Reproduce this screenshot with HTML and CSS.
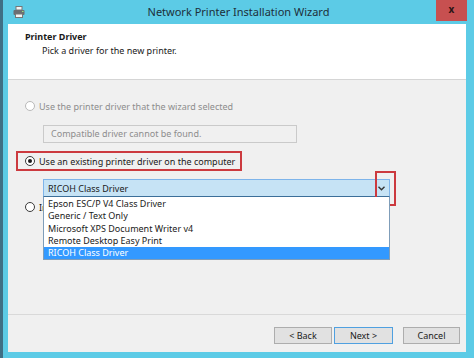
FILE: index.html
```html
<!DOCTYPE html>
<html lang="en">
<head>
    <meta charset="UTF-8">
    <title>Network Printer Installation Wizard</title>
    <link rel="stylesheet" href="styles.css">
</head>
<body>
    <div class="window">
        <div class="titlebar">
            <svg class="app-icon" width="12" height="12" viewBox="0 0 12 12">
                <rect x="3" y="0.5" width="6" height="3.5" fill="#f4f4f4" stroke="#777"/>
                <rect x="0.5" y="4" width="11" height="5" rx="1" fill="#6b6f74"/>
                <rect x="2.5" y="8" width="7" height="3.5" fill="#f4f4f4" stroke="#777"/>
                <rect x="9" y="5" width="1.5" height="1" fill="#9fe27a"/>
            </svg>
            <div class="title">Network Printer Installation Wizard</div>
            <div class="close">x</div>
        </div>
        <div class="frame">
            <div class="header">
                <div class="header-title">Printer Driver</div>
                <div class="header-sub">Pick a driver for the new printer.</div>
            </div>
            <div class="content">
                <div class="option disabled"><span class="radio"></span>Use the printer driver that the wizard selected</div>
                <div class="textbox">Compatible driver cannot be found.</div>
                <div class="option highlight"><span class="radio checked"></span>Use an existing printer driver on the computer</div>
                <div class="combo">
                    <span class="combo-value">RICOH Class Driver</span>
                    <svg class="combo-arrow" width="7" height="5" viewBox="0 0 7 5">
                        <path d="M0.5 0.8 L3.5 3.8 L6.5 0.8" fill="none" stroke="#333" stroke-width="1.4"/>
                    </svg>
                    <div class="arrow-mark"></div>
                    <ul class="list">
                        <li>Epson ESC/P V4 Class Driver</li>
                        <li>Generic / Text Only</li>
                        <li>Microsoft XPS Document Writer v4</li>
                        <li>Remote Desktop Easy Print</li>
                        <li class="selected">RICOH Class Driver</li>
                    </ul>
                </div>
                <div class="option under-list"><span class="radio"></span>In</div>
            </div>
            <div class="footer">
                <button class="btn">&lt; Back</button>
                <button class="btn default">Next &gt;</button>
                <button class="btn cancel">Cancel</button>
            </div>
        </div>
    </div>
</body>
</html>
```

FILE: styles.css
```css
html, body {
    margin: 0;
    padding: 0;
}
body {
    background-color: #3f6f85;
    font-family: "Noto Sans", "Open Sans", sans-serif;
    font-size: 9px;
    color: #1a1a1a;
}
.window {
    margin-left: 3px;
    height: 358px;
    background-color: #5ccbe6;
    display: flex;
    flex-direction: column;
}
.titlebar {
    height: 24px;
    display: grid;
    grid-template-columns: 1fr auto 1fr;
    align-items: start;
}
.app-icon {
    margin: 6px 0 0 10px;
}
.title {
    font-size: 11px;
    color: #1d2f3a;
    line-height: 22px;
    padding-top: 1px;
}
.close {
    justify-self: end;
    width: 31px;
    height: 21px;
    margin-right: 7px;
    background-color: #c75050;
    color: #2b1414;
    font-weight: bold;
    font-size: 10px;
    text-align: center;
    line-height: 19px;
}
.frame {
    flex: 1;
    margin: 0 8px 6px 5px;
    display: flex;
    flex-direction: column;
    background-color: #f0f0f0;
}
.header {
    height: 56px;
    background-color: white;
    border-bottom: 1px solid #d5d5d5;
    padding: 6px 0 0 17px;
    box-sizing: border-box;
}
.header-title {
    font-weight: bold;
    line-height: 14px;
}
.header-sub {
    line-height: 14px;
    padding-left: 17px;
}
.content {
    flex: 1;
    padding: 19px 0 0 8px;
}
.option {
    display: flex;
    align-items: center;
    height: 14px;
    padding-left: 9px;
    white-space: nowrap;
}
.option.disabled {
    color: #8d8d8d;
}
.radio {
    flex: none;
    width: 8px;
    height: 8px;
    border: 1px solid #3a3a3a;
    border-radius: 50%;
    background-color: white;
    margin-right: 4px;
    position: relative;
}
.disabled .radio {
    border-color: #b9b9b9;
}
.radio.checked::after {
    content: "";
    position: absolute;
    left: 2px;
    top: 2px;
    width: 4px;
    height: 4px;
    border-radius: 50%;
    background-color: #1a1a1a;
}
.textbox {
    width: 254px;
    height: 18px;
    margin: 12px 0 0 27px;
    border: 1px solid #cacaca;
    box-sizing: border-box;
    color: #8d8d8d;
    padding-left: 7px;
    line-height: 16px;
}
.option.highlight {
    width: 226px;
    height: 20px;
    margin-top: 8px;
    padding-left: 7px;
    border: 2px solid #cc3a3f;
    box-sizing: border-box;
}
.combo {
    position: relative;
    width: 347px;
    height: 18px;
    margin: 8px 0 0 27px;
    box-sizing: border-box;
    border: 1px solid #7eb4ea;
    border-bottom-color: #3c6f99;
    background-color: #c6e3f5;
    display: flex;
    align-items: center;
    justify-content: space-between;
    padding: 0 4px 0 4px;
}
.arrow-mark {
    position: absolute;
    left: 331px;
    top: -9px;
    width: 21px;
    height: 35px;
    border: 2px solid #cc3a3f;
    box-sizing: border-box;
}
.list {
    position: absolute;
    left: -1px;
    top: 17px;
    width: 347px;
    margin: 0;
    padding: 1px 0 0 0;
    list-style: none;
    background-color: white;
    border: 1px solid #7f9db9;
    border-top: none;
    box-sizing: border-box;
    z-index: 1;
}
.list li {
    height: 12.3px;
    line-height: 12.3px;
    padding-left: 4px;
}
.list li.selected {
    background-color: #3399ff;
    color: white;
}
.option.under-list {
    margin-top: 3px;
}
.footer {
    height: 38px;
    border-top: 1px solid #d9d9d9;
    box-sizing: border-box;
    display: flex;
    justify-content: flex-end;
    align-items: flex-start;
    padding: 12px 6px 0 0;
}
.btn {
    width: 58px;
    height: 17px;
    padding: 0;
    font-family: inherit;
    font-size: 9px;
    color: #1a1a1a;
    background-color: #e1e1e1;
    border: 1px solid #adadad;
}
.btn.default {
    width: 59px;
    margin-left: 2px;
    border-color: #4fa0e0;
}
.btn.cancel {
    width: 57px;
    margin-left: 10px;
}
```
